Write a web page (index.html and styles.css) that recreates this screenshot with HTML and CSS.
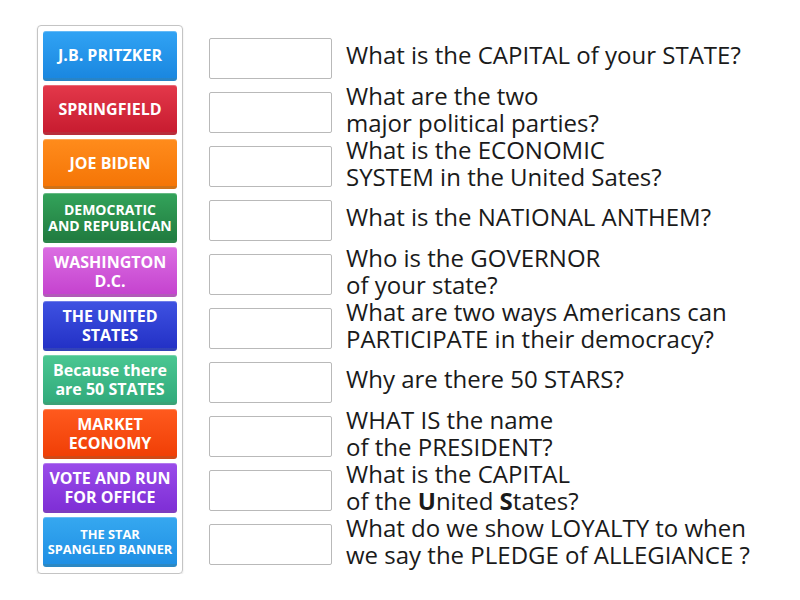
FILE: index.html
```html
<!DOCTYPE html>
<html>
<head>
<meta charset="utf-8">
<link rel="stylesheet" href="styles.css">
</head>
<body>
<div class="page">
  <div class="bank">
    <div class="tile c1 f16">J.B. PRITZKER</div>
    <div class="tile c2 f16">SPRINGFIELD</div>
    <div class="tile c3 f16">JOE BIDEN</div>
    <div class="tile c4 f14">DEMOCRATIC<br>AND REPUBLICAN</div>
    <div class="tile c5 f16">WASHINGTON<br>D.C.</div>
    <div class="tile c6 f16">THE UNITED<br>STATES</div>
    <div class="tile c7 f16">Because there<br>are 50 STATES</div>
    <div class="tile c8 f16">MARKET<br>ECONOMY</div>
    <div class="tile c9 f16">VOTE AND RUN<br>FOR OFFICE</div>
    <div class="tile c10 f13">THE STAR<br>SPANGLED BANNER</div>
  </div>
  <div class="rows">
    <div class="row"><div class="box"></div><div class="q">What is the CAPITAL of your STATE?</div></div>
    <div class="row"><div class="box"></div><div class="q">What are the two<br>major political parties?</div></div>
    <div class="row"><div class="box"></div><div class="q">What is the ECONOMIC<br>SYSTEM in the United Sates?</div></div>
    <div class="row"><div class="box"></div><div class="q">What is the NATIONAL ANTHEM?</div></div>
    <div class="row"><div class="box"></div><div class="q">Who is the GOVERNOR<br>of your state?</div></div>
    <div class="row"><div class="box"></div><div class="q">What are two ways Americans can<br>PARTICIPATE in their democracy?</div></div>
    <div class="row"><div class="box"></div><div class="q">Why are there 50 STARS?</div></div>
    <div class="row"><div class="box"></div><div class="q">WHAT IS the name<br>of the PRESIDENT?</div></div>
    <div class="row"><div class="box"></div><div class="q">What is the CAPITAL<br>of the <b>U</b>nited <b>S</b>tates?</div></div>
    <div class="row"><div class="box"></div><div class="q">What do we show LOYALTY to when<br>we say the PLEDGE of ALLEGIANCE ?</div></div>
  </div>
</div>
</body>
</html>
```

FILE: styles.css
```css
html, body {
  margin: 0;
  padding: 0;
  background: #fff;
  font-family: "Open Sans", "Noto Sans", "Liberation Sans", sans-serif;
}
.page {
  display: flex;
  align-items: flex-start;
  padding: 25px 0 0 37px;
}
.bank {
  width: 134px;
  padding: 5px 5px 6px 5px;
  border: 1px solid #c4c4c4;
  border-radius: 4px;
  display: flex;
  flex-direction: column;
  gap: 4px;
  box-shadow: 0 1px 2px rgba(0,0,0,0.12);
}
.tile {
  height: 50px;
  box-sizing: border-box;
  border-radius: 3px;
  display: flex;
  align-items: center;
  justify-content: center;
  text-align: center;
  color: #fff;
  font-weight: 700;
  border-bottom: 3px solid rgba(0,0,0,0.18);
  box-shadow: inset 0 1px 0 rgba(255,255,255,0.25);
  padding-top: 2px;
  white-space: nowrap;
}
.f16 { font-size: 16px; line-height: 19px; }
.f14 { font-size: 14px; line-height: 16px; }
.f13 { font-size: 12.8px; line-height: 14.5px; }
.c1 { background: linear-gradient(#31a3f4, #1a87e0); }
.c2 { background: linear-gradient(#e3384a, #c81c30); }
.c3 { background: linear-gradient(#ff8c1c, #f57506); }
.c4 { background: linear-gradient(#33a35a, #217c40); }
.c5 { background: linear-gradient(#db6ee2, #c543cf); }
.c6 { background: linear-gradient(#3f52e2, #2331c6); }
.c7 { background: linear-gradient(#4ac792, #32ab7c); }
.c8 { background: linear-gradient(#ff5a1e, #f03f06); }
.c9 { background: linear-gradient(#9a4cea, #7f2fd6); }
.c10 { background: linear-gradient(#36a8f0, #1f8fe4); }
.rows {
  margin-left: 26px;
  padding-top: 6px;
  display: flex;
  flex-direction: column;
}
.row {
  height: 54px;
  display: flex;
  align-items: center;
  gap: 14px;
}
.box {
  width: 121px;
  height: 39px;
  border: 1px solid #b9b9b9;
  border-radius: 2px;
  flex: none;
}
.q {
  font-size: 24px;
  line-height: 27px;
  color: #1a1a1a;
  white-space: nowrap;
  padding-bottom: 7px;
}
.q b { font-weight: 700; }
```
